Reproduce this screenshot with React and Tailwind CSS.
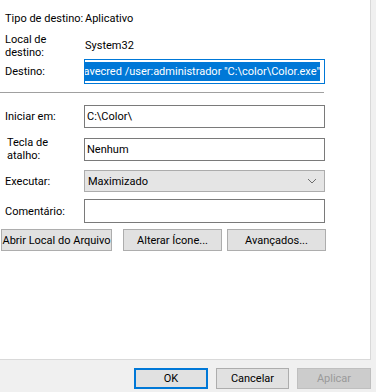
import React from "react";

// Windows "Propriedades do atalho" tab, cropped
const LABEL = "w-[79px] shrink-0";
const FIELD = "w-[241px] border border-[#7a7a7a] bg-white flex items-center pl-[2px] whitespace-nowrap overflow-hidden";
const BTN = "h-[22px] border border-[#adadad] bg-[#e1e1e1] flex items-center justify-center";

function Chevron() {
  return (
    <svg width="10" height="6" viewBox="0 0 10 6" className="block">
      <path d="M1 1 L5 5 L9 1" fill="none" stroke="#6d6d6d" strokeWidth="1" />
    </svg>
  );
}

export default function App() {
  return (
    <div className="w-[376px] h-[392px] bg-[#f0f0f0] overflow-hidden text-[11px] text-black font-['Roboto',sans-serif] leading-[13px]">
      <div className="w-[371px] h-[360px] bg-white border-r border-b border-[#d9d9d9] pt-[10px]">
        <div className="flex items-center h-[16px] pl-[5px]">
          <span className={LABEL}>Tipo de destino:</span>
          <span className="pl-[1px]">Aplicativo</span>
        </div>

        <div className="flex items-center h-[26px] mt-[7px] pl-[5px]">
          <span className={LABEL}>Local de<br />destino:</span>
          <span className="pl-[1px] -mt-[1px]">System32</span>
        </div>

        <div className="flex items-center pl-[5px]">
          <span className={LABEL}>Destino:</span>
          <div className="w-[241px] h-[25px] border border-[#0078d7] bg-white flex items-center justify-end pr-[4px] overflow-hidden whitespace-nowrap">
            <span className="bg-[#0078d7] text-white h-[19px] flex items-center">
              runas /savecred /user:administrador "C:\color\Color.exe"
            </span>
            <span className="w-[1px] h-[17px] bg-[#e37b1c]" />
          </div>
        </div>

        <div className="w-[324px] h-[1px] bg-[#a0a0a0] mt-[8px]" />

        <div className="flex items-center mt-[12px] pl-[5px]">
          <span className={LABEL}>Iniciar em:</span>
          <div className={FIELD + " h-[23px]"}>C:\Color\</div>
        </div>

        <div className="flex items-center mt-[8px] pl-[5px]">
          <span className={LABEL + " pl-[2px]"}>Tecla de<br />atalho:</span>
          <div className={FIELD + " h-[23px]"}>Nenhum</div>
        </div>

        <div className="flex items-center mt-[8px] pl-[5px]">
          <span className={LABEL}>Executar:</span>
          <div className="w-[241px] h-[22px] border border-[#acacac] bg-[#e5e5e5] flex items-center justify-between pl-[3px] pr-[7px]">
            <span>Maximizado</span>
            <Chevron />
          </div>
        </div>

        <div className="flex items-center mt-[7px] pl-[5px]">
          <span className={LABEL}>Comentário:</span>
          <div className={FIELD + " h-[24px]"} />
        </div>

        <div className="flex mt-[6px] pl-[1px]">
          <div className={BTN + " w-[111px]"}>Abrir Local do Arquivo</div>
          <div className={BTN + " w-[99px] ml-[11px]"}>Alterar Ícone...</div>
          <div className={BTN + " w-[99px] ml-[5px]"}>Avançados...</div>
        </div>
      </div>

      <div className="flex justify-end gap-[8px] pr-[5px] mt-[8px]">
        <div className="w-[74px] h-[21px] border-2 border-[#0078d7] bg-[#e1e1e1] flex items-center justify-center">OK</div>
        <div className="w-[73px] h-[21px] border border-[#adadad] bg-[#e1e1e1] flex items-center justify-center">Cancelar</div>
        <div className="w-[74px] h-[21px] border border-[#bfbfbf] bg-[#cccccc] text-[#9a9a9a] flex items-center justify-center">Aplicar</div>
      </div>
    </div>
  );
}
